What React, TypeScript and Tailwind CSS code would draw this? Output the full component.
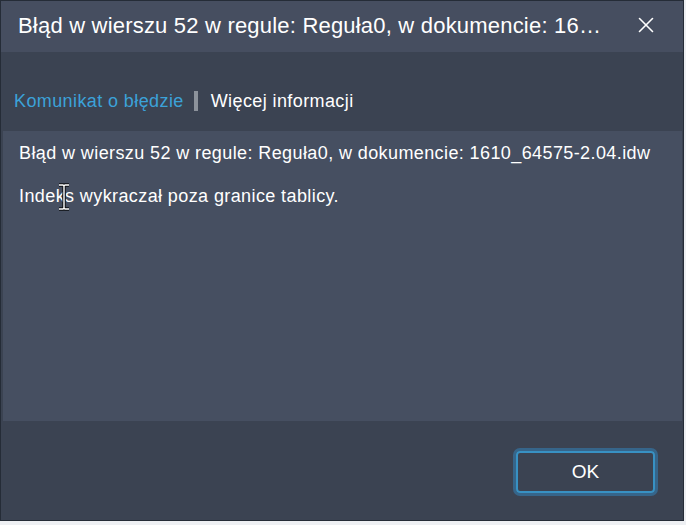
import { X } from 'lucide-react';

function IBeam() {
  return (
    <svg
      className="pointer-events-none absolute left-[56px] top-[183px]"
      width="16"
      height="28"
      viewBox="0 0 16 28"
    >
      <path
        d="M3 2h4l1 1 1-1h4M3 26h4l1-1 1 1h4M8 3v22"
        fill="none"
        stroke="#0d0f12"
        strokeWidth="3.4"
      />
      <path
        d="M3 2h4l1 1 1-1h4M3 26h4l1-1 1 1h4M8 3v22"
        fill="none"
        stroke="#fff"
        strokeWidth="1.4"
      />
    </svg>
  );
}

function App(): JSX.Element {
  return (
    <div className="relative h-[525px] w-[686px] bg-[#eef0f3] font-['Liberation_Sans',Arial,sans-serif]">
      <div className="flex h-[521px] w-[684px] flex-col border border-[#252c37] bg-[#3b4352]">
        <div className="flex h-[51px] shrink-0 items-center bg-[#464e60] pb-[2px] pl-[17px]">
          <div className="w-[590px] truncate text-[22px] tracking-[0.2px] text-white">
            Błąd w wierszu 52 w regule: Reguła0, w dokumencie: 1610_64575-2.04.idw
          </div>
          <button type="button" className="ml-[25px] pb-[1px] text-white">
            <X size={26} strokeWidth={1.5} />
          </button>
        </div>

        <div className="flex h-[79px] shrink-0 items-center pl-[13px] pt-[19px] text-[18px] tracking-[0.4px]">
          <span className="text-[#3ba2d9]">Komunikat o błędzie</span>
          <span className="ml-[10px] mr-[13px] h-[20px] w-[4px] bg-[#8c929b]" />
          <span className="text-white">Więcej informacji</span>
        </div>

        <div className="ml-[2px] mr-[1px] h-[290px] shrink-0 bg-[#464f61] px-[16px] pt-[12px] text-[18px] leading-[21px] tracking-[0.4px] text-white">
          <p>Błąd w wierszu 52 w regule: Reguła0, w dokumencie: 1610_64575-2.04.idw</p>
          <p className="mt-[22px]">Indeks wykraczał poza granice tablicy.</p>
        </div>

        <div className="flex flex-1 items-end justify-end pb-[27px] pr-[28px]">
          <button
            type="button"
            className="h-[42px] w-[139px] rounded-[4px] border-2 border-[#3891c3] text-[19px] text-white shadow-[0_0_0_3px_#36658a]"
          >
            OK
          </button>
        </div>
      </div>
      <IBeam />
    </div>
  );
}

export default App;
